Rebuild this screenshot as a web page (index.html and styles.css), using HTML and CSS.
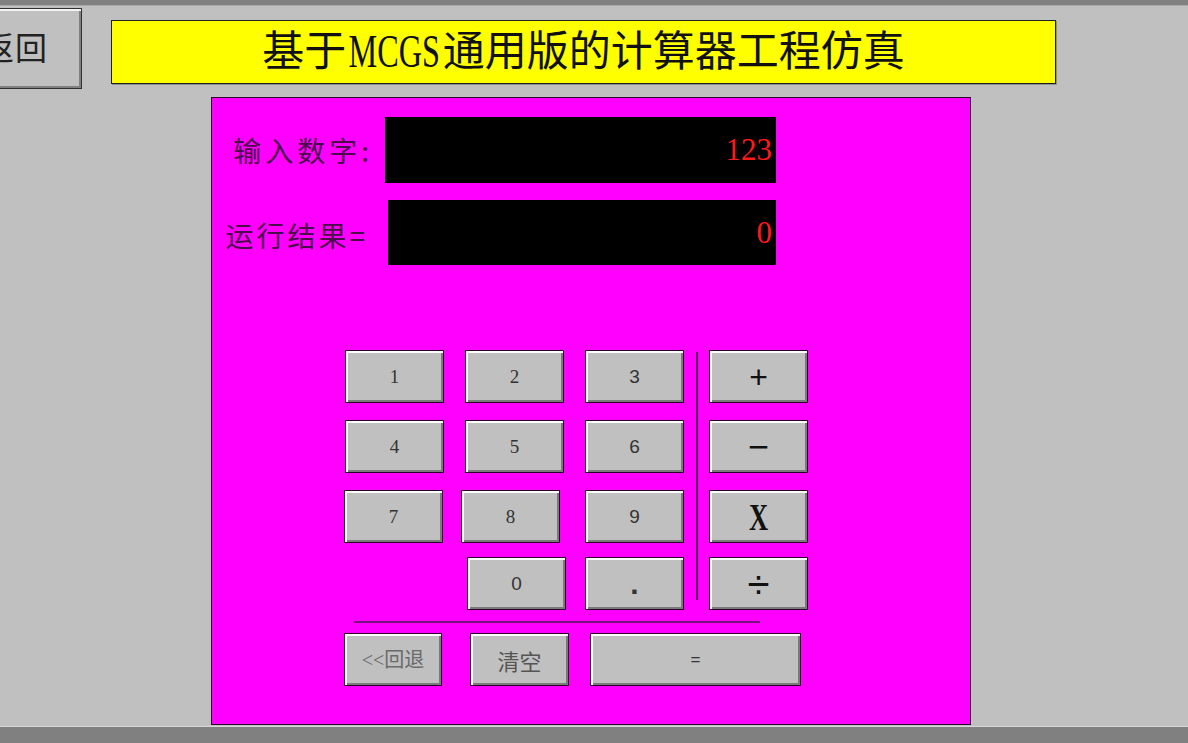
FILE: index.html
```html
<!DOCTYPE html>
<html lang="zh-CN">
<head>
<meta charset="utf-8">
<title>基于MCGS通用版的计算器工程仿真</title>
<link rel="stylesheet" href="styles.css">
</head>
<body>
<div class="screen">
  <div class="topbar"></div>
  <div class="header">
    <button class="back-btn">返回</button>
    <div class="title">基于<span class="mcgs">MCGS</span>通用版的计算器工程仿真</div>
  </div>
  <div class="panel">
    <div class="field-row">
      <div class="label label-in">输入数字:</div>
      <div class="display display-in">123</div>
    </div>
    <div class="field-row row-result">
      <div class="label label-out">运行结果=</div>
      <div class="display display-out">0</div>
    </div>
    <div class="keypad">
      <button class="key serif c1 r1">1</button>
      <button class="key serif c2 r1">2</button>
      <button class="key sans c3 r1">3</button>
      <button class="key op c4 r1"><span class="plus">+</span></button>
      <button class="key serif c1 r2">4</button>
      <button class="key serif c2 r2">5</button>
      <button class="key sans c3 r2">6</button>
      <button class="key op c4 r2"><span class="minus">−</span></button>
      <button class="key serif c1 r3 shift-l">7</button>
      <button class="key serif c2 r3 shift-l4">8</button>
      <button class="key sans c3 r3">9</button>
      <button class="key op c4 r3"><span class="times">X</span></button>
      <button class="key sans c2 r4 shift-r">0</button>
      <button class="key sans c3 r4"><span class="dot">.</span></button>
      <button class="key op c4 r4"><span class="divide">÷</span></button>
      <div class="vline"></div>
    </div>
    <div class="hline"></div>
    <div class="bottom-row">
      <button class="key wide-sm back-key">&lt;&lt;回退</button>
      <button class="key wide-sm clear-key">清空</button>
      <button class="key equals-key">=</button>
    </div>
  </div>
  <div class="bottombar"></div>
</div>
</body>
</html>
```

FILE: styles.css
```css
html, body {
  margin: 0;
  padding: 0;
  background: #c0c0c0;
}

.screen {
  width: 1188px;
  height: 743px;
  overflow: hidden;
  display: flex;
  flex-direction: column;
  background: #c0c0c0;
  font-family: "Liberation Serif", "Noto Sans CJK SC", serif;
}

.topbar {
  height: 5px;
  background: #808080;
  border-bottom: 1px solid #a8a8a8;
  flex: none;
}

.header {
  display: flex;
  align-items: flex-start;
  flex: none;
}

.back-btn {
  margin: 2px 0 0 -52px;
  width: 134px;
  height: 81px;
  box-sizing: border-box;
  background: #c0c0c0;
  border: 1px solid #303030;
  box-shadow: inset 2px 2px 0 #f4f4f4, inset -2px -2px 0 #808080;
  font-family: "Liberation Serif", "Noto Sans CJK SC", serif;
  font-size: 32px;
  color: #222;
  line-height: 1;
  padding: 0;
  letter-spacing: 1px;
}

.title {
  margin: 14px 0 0 29px;
  width: 945px;
  height: 64px;
  box-sizing: border-box;
  background: #ffff00;
  border: 1px solid #202020;
  box-shadow: 1px 1px 0 #909090;
  display: flex;
  align-items: center;
  justify-content: center;
  font-family: "Liberation Serif", "Noto Sans CJK SC", serif;
  font-size: 42px;
  line-height: 1;
  color: #111;
}

.mcgs {
  display: inline-block;
  font-family: "Liberation Serif", serif;
  font-size: 46px;
  transform: scaleX(0.7);
  margin: 0 -17px 0 -17px;
}

.panel {
  margin: 8px 0 0 211px;
  width: 760px;
  height: 628px;
  box-sizing: border-box;
  background: #ff00ff;
  border: 1px solid #2a0a2a;
  padding-top: 19px;
  flex: none;
  display: flex;
  flex-direction: column;
}

.field-row {
  display: flex;
  align-items: center;
  height: 66px;
}

.row-result {
  margin-top: 17px;
  height: 65px;
}

.label {
  box-sizing: border-box;
  text-align: right;
  font-family: "Noto Sans CJK SC", "Liberation Serif", sans-serif;
  font-size: 28px;
  line-height: 1;
  color: #4a0c4a;
  letter-spacing: 3px;
}

.label-in {
  width: 173px;
  padding-right: 12px;
  letter-spacing: 4px;
}

.label-out {
  width: 176px;
  padding-right: 20px;
  margin-top: 4px;
}

.display {
  height: 100%;
  background: #000;
  color: #ff1a1a;
  font-family: "Liberation Serif", serif;
  font-size: 31px;
  display: flex;
  align-items: center;
  justify-content: flex-end;
  padding-right: 4px;
  box-sizing: border-box;
}

.display-in { width: 391px; }
.display-out { width: 388px; }

.keypad {
  margin: 85px 0 0 133px;
  display: grid;
  grid-template-columns: 99px 21px 99px 21px 99px 25px 99px;
  grid-template-rows: 53px 53px 53px 53px;
  row-gap: 17px;
}

.key {
  box-sizing: border-box;
  background: #c0c0c0;
  border: 1px solid #2a002a;
  box-shadow: inset 2px 2px 0 #ffffff, inset -2px -2px 0 #7a7a7a;
  padding: 0;
  margin: 0;
  color: #333;
  font-size: 19px;
  line-height: 1;
  display: flex;
  align-items: center;
  justify-content: center;
  width: 99px;
  height: 53px;
}

.serif { font-family: "Liberation Serif", serif; }
.sans { font-family: "Liberation Sans", sans-serif; }

.c1 { grid-column: 1; }
.c2 { grid-column: 3; }
.c3 { grid-column: 5; }
.c4 { grid-column: 7; }
.r1 { grid-row: 1; }
.r2 { grid-row: 2; }
.r3 { grid-row: 3; }
.r4 { grid-row: 4; margin-top: -3px; }

.shift-l { margin-left: -1px; }
.shift-l4 { margin-left: -4px; }
.shift-r { margin-left: 2px; }

.op {
  font-family: "Liberation Sans", sans-serif;
  color: #111;
}

.plus {
  font-size: 32px;
  font-weight: 300;
}

.minus {
  font-size: 36px;
}

.times {
  font-family: "Liberation Serif", serif;
  font-size: 38px;
  font-weight: bold;
  display: inline-block;
  transform: scaleX(0.7);
}

.divide {
  font-size: 40px;
}

.dot {
  font-size: 30px;
  font-weight: bold;
}

.vline {
  grid-column: 6;
  grid-row: 1 / 5;
  justify-self: center;
  align-self: start;
  margin-top: 2px;
  width: 2px;
  height: 248px;
  background: #5a0a5a;
}

.hline {
  margin: 8px 0 0 142px;
  width: 406px;
  height: 2px;
  background: #7a107a;
}

.bottom-row {
  margin: 10px 0 0 132px;
  display: flex;
}

.back-key {
  width: 98px;
  font-family: "Liberation Serif", "Noto Sans CJK SC", serif;
  font-size: 20px;
  color: #6a6a6a;
}

.clear-key {
  margin-left: 28px;
  font-family: "Noto Sans CJK SC", sans-serif;
  font-size: 22px;
  color: #555;
}

.equals-key {
  margin-left: 21px;
  width: 211px;
  font-family: "Liberation Sans", sans-serif;
  font-size: 17px;
  color: #333;
}

.bottombar {
  margin-top: auto;
  height: 16px;
  background: #808080;
  border-top: 1px solid #d8d8d8;
  flex: none;
}
```
